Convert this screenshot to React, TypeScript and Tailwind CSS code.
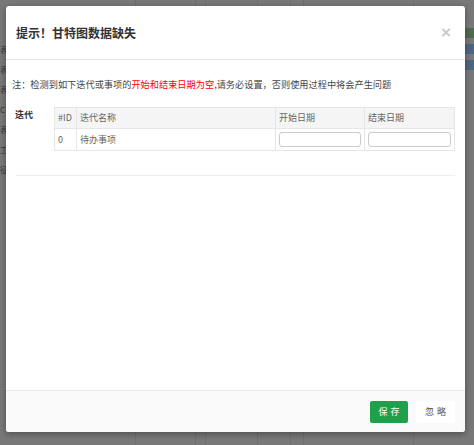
import React from "react";

export default function App() {
  const font = { fontFamily: '"Noto Sans CJK SC", "Liberation Sans", sans-serif' };
  return (
    <div className="relative w-[474px] h-[445px] overflow-hidden bg-[#787878]" style={font}>
      {/* dimmed page behind */}
      <div className="flex h-full w-full">
        <div className="w-[6px] flex flex-col gap-[12px] pt-[46px] text-[8px] text-[#3a3a3a] leading-[8px] overflow-hidden">
          <span>表</span><span>表</span><span>表</span><span>C</span><span>表</span><span>工</span><span>征</span>
        </div>
        <div className="flex-1 flex">
          <div className="w-[130px] border-r border-[#6e6e6e]" />
          <div className="w-[60px] border-r border-[#6e6e6e]" />
          <div className="w-[10px] border-r border-[#6e6e6e]" />
          <div className="w-[52px] border-r border-[#6e6e6e]" />
          <div className="w-[33px] border-r border-[#6e6e6e]" />
          <div className="w-[13px] border-r border-[#6e6e6e]" />
          <div className="w-[110px] border-r border-[#6e6e6e]" />
        </div>
        <div className="w-[9px] flex flex-col pt-[28px] gap-[6px]">
          <div className="h-[10px] bg-[#4f6b4f]" />
          <div className="h-[10px] bg-[#4d6680]" />
          <div className="h-[10px] bg-[#4d6680]" />
        </div>
      </div>

      {/* modal */}
      <div className="absolute left-[6px] top-[6px] w-[459px] h-[426px] bg-white rounded-[3px] flex flex-col shadow-[0_2px_6px_rgba(0,0,0,0.35)]">
        <div className="h-[54px] flex items-center justify-between pl-[10px] pr-[14px] border-b border-[#e5e5e5] shrink-0">
          <span className="text-[12px] font-bold text-[#333]">提示！甘特图数据缺失</span>
          <span className="text-[17px] font-bold text-[#c8c8c8] leading-none" style={{ fontFamily: '"Liberation Sans", sans-serif' }}>×</span>
        </div>
        <div className="flex-1 flex flex-col pt-[17px]">
          <div className="pl-[6px] text-[9.2px] text-[#444] leading-[14px] whitespace-nowrap">
            注：检测到如下迭代或事项的<span className="text-[#f00]">开始和结束日期为空</span>,请务必设置，否则使用过程中将会产生问题
          </div>
          <div className="flex mt-[16px] pl-[9px] pr-[10px]">
            <div className="w-[39px] text-[9px] font-bold text-[#333] pt-[1px]">迭代</div>
            <table className="flex-1 border-collapse text-[9px] text-[#666]">
              <thead>
                <tr className="bg-[#f5f5f5] h-[21px]">
                  <td className="border border-[#e6e6e6] w-[22px] px-[3px] font-normal">#ID</td>
                  <td className="border border-[#e6e6e6] px-[3px]">迭代名称</td>
                  <td className="border border-[#e6e6e6] w-[89px] px-[3px]">开始日期</td>
                  <td className="border border-[#e6e6e6] w-[90px] px-[3px]">结束日期</td>
                </tr>
              </thead>
              <tbody>
                <tr className="h-[22px]">
                  <td className="border border-[#e6e6e6] px-[3px]">0</td>
                  <td className="border border-[#e6e6e6] px-[3px]">待办事项</td>
                  <td className="border border-[#e6e6e6] px-[3px]">
                    <div className="h-[15px] border border-[#ccc] rounded-[3px]" />
                  </td>
                  <td className="border border-[#e6e6e6] px-[3px]">
                    <div className="h-[15px] border border-[#ccc] rounded-[3px]" />
                  </td>
                </tr>
              </tbody>
            </table>
          </div>
          <div className="mx-[10px] mt-[24px] border-t border-[#eeeeee]" />
        </div>
        <div className="h-[42px] shrink-0 border-t border-[#e8e8e8] bg-[#fafafa] flex items-center justify-end gap-[8px] pr-[10px] rounded-b-[3px]">
          <button className="w-[38px] h-[22px] bg-[#1fa14b] text-white text-[9px] rounded-[2px] tracking-[3px] pl-[3px]">保存</button>
          <button className="w-[39px] h-[22px] bg-white text-[#555] text-[9px] rounded-[2px] tracking-[3px] pl-[3px]">忽略</button>
        </div>
      </div>
    </div>
  );
}
